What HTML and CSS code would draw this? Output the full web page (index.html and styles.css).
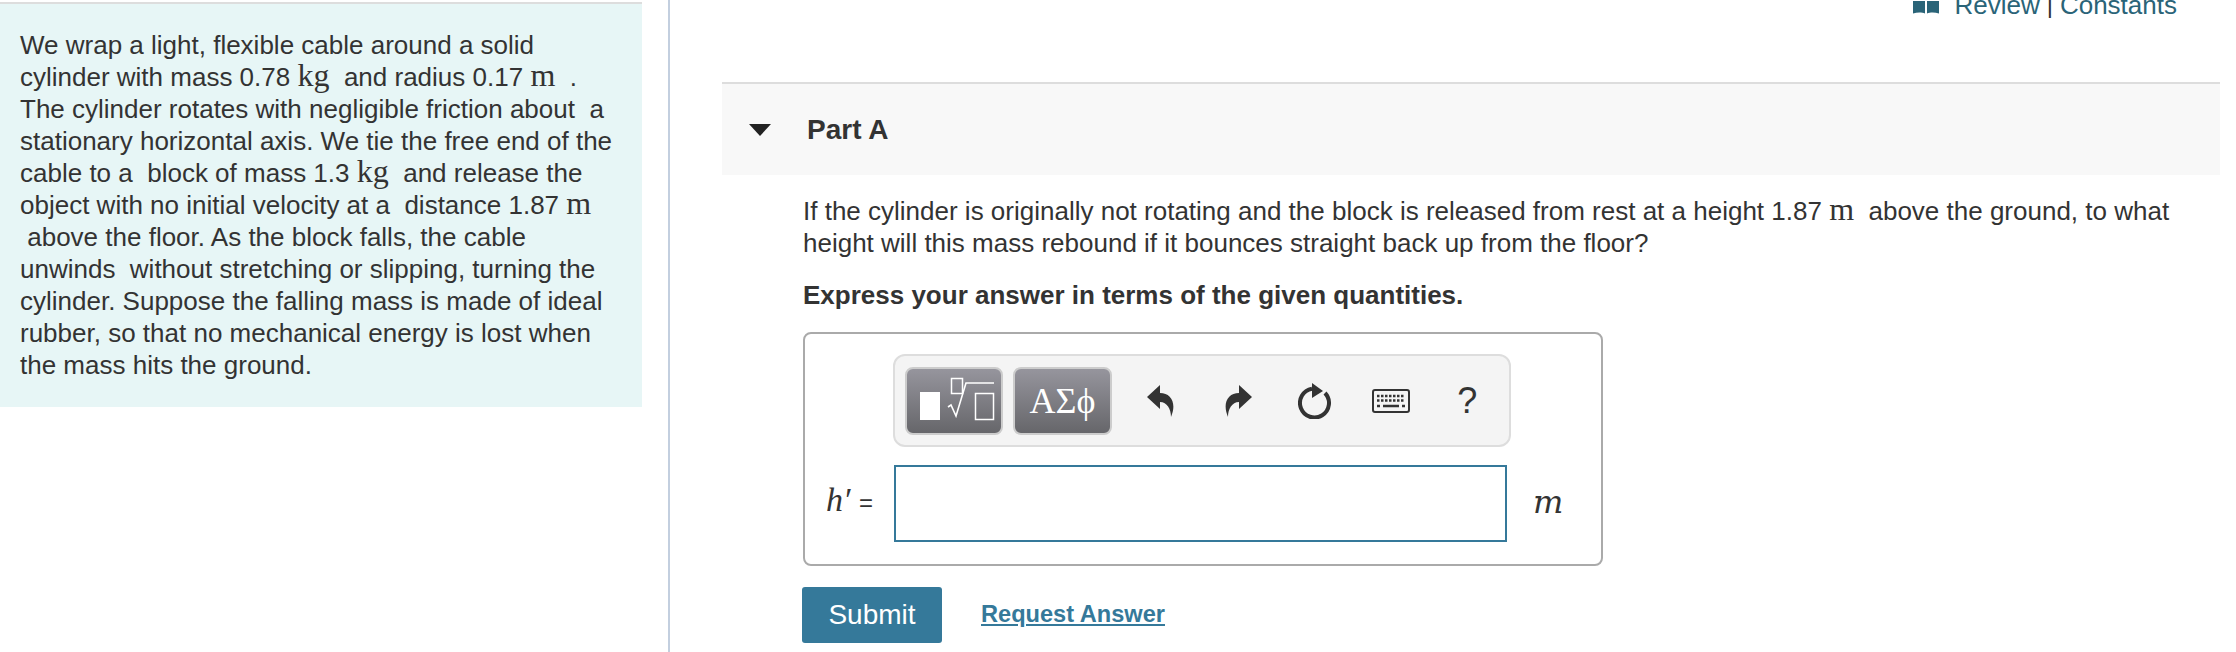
FILE: index.html
```html
<!DOCTYPE html>
<html lang="en">
<head>
    <meta charset="UTF-8">
    <title>Part A</title>
    <link rel="stylesheet" href="styles.css">
</head>
<body>
    <div class="page">
        <aside class="left-col">
            <div class="intro">
                We wrap a light, flexible cable around a solid<br>
                cylinder with mass 0.78 <span class="unit">kg</span> &nbsp;and radius 0.17 <span class="unit">m</span> &nbsp;.<br>
                The cylinder rotates with negligible friction about &nbsp;a<br>
                stationary horizontal axis. We tie the free end of the<br>
                cable to a &nbsp;block of mass 1.3 <span class="unit">kg</span> &nbsp;and release the<br>
                object with no initial velocity at a &nbsp;distance 1.87 <span class="unit">m</span><br>
                &nbsp;above the floor. As the block falls, the cable<br>
                unwinds &nbsp;without stretching or slipping, turning the<br>
                cylinder. Suppose the falling mass is made of ideal<br>
                rubber, so that no mechanical energy is lost when<br>
                the mass hits the ground.
            </div>
        </aside>

        <main class="right-col">
            <div class="top-links">
                <svg class="book" width="26" height="14" viewBox="0 0 26 14">
                    <path d="M0 0h12v12.500c-3-1.200-8-1.200-12 0z" fill="#2a6478"/>
                    <path d="M14 0h12v12.500c-4-1.200-9-1.200-12 0z" fill="#2a6478"/>
                </svg>
                <a class="top-link">Review</a>
                <span class="sep">|</span>
                <a class="top-link">Constants</a>
            </div>

            <section class="part">
                <div class="part-header">
                    <span class="caret"></span>
                    <h2>Part A</h2>
                </div>

                <div class="part-body">
                    <p class="question">If the cylinder is originally not rotating and the block is released from rest at a height 1.87 <span class="unit">m</span> &nbsp;above the ground, to what<br>height will this mass rebound if it bounces straight back up from the floor?</p>
                    <p class="instruction">Express your answer in terms of the given quantities.</p>

                    <div class="answer-box">
                        <div class="toolbar">
                            <button class="tool-btn templates">
                                <svg class="tool-art" width="94" height="64" viewBox="2 2 94 64">
                                    <rect x="15" y="25" width="20" height="28" fill="#fff"/>
                                    <rect x="46.500" y="11.500" width="11" height="15" fill="none" stroke="#fff" stroke-width="1.500"/>
                                    <path d="M43 40l3-2 5 11 10-33h28" fill="none" stroke="#fff" stroke-width="1.600"/>
                                    <rect x="70.500" y="26.500" width="18" height="26" fill="none" stroke="#fff" stroke-width="1.500"/>
                                </svg>
                            </button>
                            <button class="tool-btn symbols">ΑΣϕ</button>
                            <div class="tool-icons">
                                <svg width="28" height="32" viewBox="0 0 28 32">
                                    <path d="M0 12L13 0v8c11 0 17 10 11 24 0-8-4-15-11-15v7z" fill="#333"/>
                                </svg>
                                <svg width="28" height="32" viewBox="0 0 28 32">
                                    <path d="M28 12L15 0v8C4 8-2 18 4 32c0-8 4-15 11-15v7z" fill="#333"/>
                                </svg>
                                <svg width="33" height="36" viewBox="0 0 33 36">
                                    <path d="M14 5.700A14.500 14.500 0 1 0 27 10" fill="none" stroke="#333" stroke-width="4"/>
                                    <path d="M14 0l11 8-11 7z" fill="#333"/>
                                </svg>
                                <svg width="38" height="24" viewBox="0 0 38 24">
                                    <rect x="1" y="1" width="36" height="22" rx="2" fill="none" stroke="#333" stroke-width="2"/>
                                    <path d="M5 7h28M5 11.500h28" stroke="#333" stroke-width="2.500" stroke-dasharray="2.500 1.500"/>
                                    <path d="M5 17h3M11 17h16M30 17h3" stroke="#333" stroke-width="2.500"/>
                                </svg>
                                <span class="help">?</span>
                            </div>
                        </div>

                        <div class="answer-row">
                            <span class="var lhs">h′ <span class="eq">=</span></span>
                            <input class="answer-input" type="text">
                            <span class="answer-unit">m</span>
                        </div>
                    </div>

                    <div class="actions">
                        <button class="submit">Submit</button>
                        <a class="request">Request Answer</a>
                    </div>
                </div>
            </section>
        </main>
    </div>
</body>
</html>
```

FILE: styles.css
```css
html, body {
    margin: 0;
    height: 100%;
    overflow: hidden;
    background: #fff;
}
body {
    font-family: "Liberation Sans", Arial, sans-serif;
    font-size: 26px;
    line-height: 32px;
    color: #333;
}
.page {
    display: flex;
    height: 652px;
}
.left-col {
    width: 668px;
    flex: none;
    border-right: 2px solid #c3cfdf;
}
.intro {
    width: 642px;
    box-sizing: border-box;
    margin-top: 2px;
    height: 405px;
    padding: 25px 0 0 20px;
    background: #e7f6f6;
    border-top: 2px solid #ddd;
}
.unit {
    font-family: "Liberation Serif", serif;
    font-size: 32px;
    line-height: 0;
}
.right-col {
    flex: 1;
    padding: 0 16px 0 52px;
    min-width: 0;
}
.top-links {
    display: flex;
    justify-content: flex-end;
    align-items: center;
    height: 32px;
    margin-top: -11px;
    margin-right: 43px;
}
.book {
    margin: 6px 15px 0 0;
}
.top-link {
    color: #2a6478;
}
.sep {
    color: #333;
    margin: 0 7px;
    font-size: 24px;
}
.part {
    margin-top: 61px;
}
.part-header {
    display: flex;
    align-items: center;
    height: 91px;
    background: #f8f8f8;
    border-top: 2px solid #ddd;
}
.caret {
    width: 0;
    height: 0;
    margin-left: 27px;
    border-left: 11px solid transparent;
    border-right: 11px solid transparent;
    border-top: 12px solid #222;
}
h2 {
    margin: 0 0 0 36px;
    font-size: 28px;
    font-weight: bold;
}
.part-body {
    padding: 20px 0 0 81px;
}
.question {
    margin: 0;
}
.instruction {
    margin: 20px 0 0;
    font-weight: bold;
}
.answer-box {
    width: 800px;
    height: 234px;
    box-sizing: border-box;
    margin-top: 21px;
    padding: 20px 0 0 89px;
    border: 2px solid #aaa;
    border-radius: 8px;
}
.toolbar {
    display: flex;
    align-items: center;
    width: 618px;
    height: 93px;
    box-sizing: border-box;
    margin-left: -1px;
    padding-left: 10px;
    background: #f4f4f4;
    border: 2px solid #ddd;
    border-radius: 12px;
}
.tool-btn {
    height: 68px;
    padding: 0;
    border: 2px solid #ccc;
    border-radius: 8px;
    background: linear-gradient(#96959d, #66666a);
    color: #fff;
}
.tool-art {
    display: block;
    margin: 0 auto;
}
.templates {
    width: 98px;
    margin-right: 10px;
}
.symbols {
    width: 99px;
    font-family: "Liberation Serif", serif;
    font-size: 36px;
}
.tool-icons {
    display: grid;
    grid-template-columns: repeat(5, 76.5px);
    align-items: center;
    justify-items: center;
    margin-left: 11px;
}
.help {
    font-size: 36px;
}
.answer-row {
    display: flex;
    align-items: center;
    margin-top: 18px;
}
.var {
    font-family: "Liberation Serif", serif;
    font-style: italic;
    font-size: 34px;
}
.eq {
    font-family: "Liberation Sans", sans-serif;
    font-style: normal;
    font-size: 24px;
}
.lhs {
    width: 0;
    margin: 0 68px 4px -68px;
    white-space: nowrap;
}
.answer-input {
    width: 613px;
    height: 77px;
    box-sizing: border-box;
    border: 2px solid #35799a;
    background: #fff;
    outline: none;
}
.answer-unit {
    margin: 0 0 4px 26px;
    font-family: "DejaVu Serif", serif;
    font-style: italic;
    font-size: 32px;
}
.actions {
    display: flex;
    align-items: center;
    margin: 21px 0 0 -1px;
}
.submit {
    width: 140px;
    height: 56px;
    border: none;
    border-radius: 3px;
    background: #35799a;
    color: #fff;
    font-family: inherit;
    font-size: 28px;
}
.request {
    margin: 0 0 2px 39px;
    color: #35799a;
    font-weight: bold;
    font-size: 23.600px;
    text-decoration: underline;
}
```
